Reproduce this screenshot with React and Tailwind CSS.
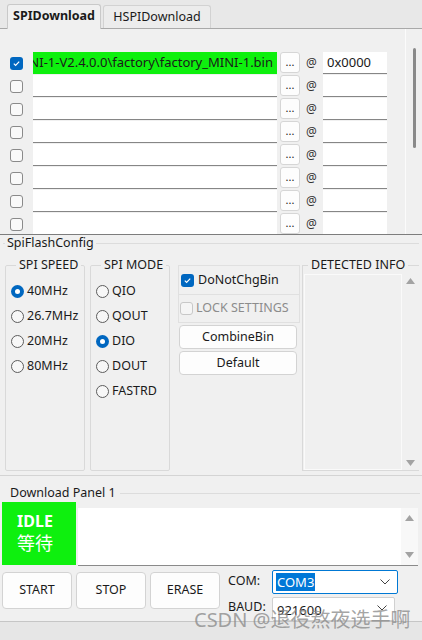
import { useState } from "react";

const font = { fontFamily: '"Noto Sans", "Noto Sans CJK SC", sans-serif' };

const Check = ({ checked, disabled }) => (
  <span
    className={
      "inline-flex w-[13px] h-[13px] shrink-0 items-center justify-center rounded-[3px] " +
      (checked
        ? "bg-[#0067c0]"
        : disabled
        ? "border border-[#c8c8c8] bg-[#f5f5f5]"
        : "border border-[#8a8a8a] bg-[#f9f9f9]")
    }>
    {checked && (
      <svg width="9" height="9" viewBox="0 0 10 10">
        <path d="M2 5.2l2 2 4-4.4" fill="none" stroke="#fff" strokeWidth="1.3" />
      </svg>
    )}
  </span>
);

const Radio = ({ on }) => (
  <span
    className={
      "inline-flex w-[13px] h-[13px] shrink-0 items-center justify-center rounded-full " +
      (on ? "bg-[#0067c0]" : "border border-[#5c5c5c] bg-[#f7f7f7]")
    }>
    {on && <span className="w-[5px] h-[5px] rounded-full bg-white" />}
  </span>
);

const Arrow = ({ down }) => (
  <svg width="9" height="6" viewBox="0 0 9 6">
    <path d={down ? "M0 0h9L4.5 6z" : "M0 6h9L4.5 0z"} fill="#a3a3a3" />
  </svg>
);

const Chevron = () => (
  <svg width="10" height="6" viewBox="0 0 10 6">
    <path d="M0.5 0.5l4.5 4.5 4.5-4.5" fill="none" stroke="#444" strokeWidth="1" />
  </svg>
);

const FileRow = ({ path, addr, checked, green }) => (
  <div className="flex h-[23px] items-start">
    <div className="w-[33px] h-[22px] flex items-center justify-center">
      <Check checked={checked} />
    </div>
    <div
      className={
        "w-[244px] h-[22px] flex items-center justify-end overflow-hidden whitespace-nowrap pr-[4px] text-[13px] text-[#1a1a1a] " +
        (green ? "bg-[#0ef00e]" : "bg-white border-b border-[#868686]")
      }>
      {path}
    </div>
    <button className="ml-[3px] w-[20px] h-[21px] rounded-[3px] border border-[#d6d6d6] bg-[#fdfdfd] text-[11px] leading-none pb-[2px] text-[#222]">
      ...
    </button>
    <span className="w-[23px] h-[22px] flex items-center justify-center text-[12px] text-[#333]">@</span>
    <div className="w-[64px] h-[22px] bg-white border-b border-[#868686] flex items-center px-[4px] text-[13px] text-[#1a1a1a]">
      {addr}
    </div>
  </div>
);

const Group = ({ title, className, children }) => (
  <fieldset className={"border border-[#d9d9d9] rounded-[2px] " + className}>
    <legend className="px-[3px] ml-[5px] text-[12.5px] leading-[16px] text-[#1a1a1a]">{title}</legend>
    {children}
  </fieldset>
);

const Opt = ({ label, on }) => (
  <div className="flex items-center gap-[3px] h-[25px] text-[12.5px] text-[#1a1a1a]">
    <Radio on={on} />
    <span>{label}</span>
  </div>
);

const Btn = ({ children, className }) => (
  <button
    className={
      "rounded-[4px] border border-[#d3d3d3] bg-[#fdfdfd] text-[12.5px] text-[#1a1a1a] flex items-center justify-center " +
      className
    }>
    {children}
  </button>
);

export default function App() {
  const [speed] = useState("40MHz");
  const [mode] = useState("DIO");
  const rows = [
    { path: "NI-1-V2.4.0.0\\factory\\factory_MINI-1.bin", addr: "0x0000", checked: true, green: true },
    {}, {}, {}, {}, {}, {}, {},
  ];

  return (
    <div className="relative w-[422px] h-[640px] overflow-hidden bg-[#f0f0f0] text-[#1a1a1a]" style={font}>
      {/* tabs */}
      <div className="h-[29px] bg-[#e8e8e8] border-b border-[#a9a9a9] flex items-end pl-[7px] gap-[2px]">
        <div className="h-[25px] w-[94px] bg-[#f0f0f0] border border-b-0 border-[#c9c9c9] rounded-t-[3px] flex items-center justify-center text-[12.5px] font-bold -mb-px pb-[1px]">
          SPIDownload
        </div>
        <div className="h-[23px] w-[108px] bg-[#ececec] border border-b-0 border-[#d2d2d2] rounded-t-[3px] flex items-center justify-center text-[12.5px]">
          HSPIDownload
        </div>
      </div>

      {/* file list */}
      <div className="h-[206px] flex border-b border-[#7d7d7d]">
        <div className="flex-1 pt-[23px] overflow-hidden">
          {rows.map((r, i) => (
            <FileRow key={i} {...r} />
          ))}
        </div>
        <div className="w-[17px] border-l border-[#fbfbfb] flex justify-center pt-[19px]">
          <div className="w-[3px] h-[100px] bg-[#8a8a8a] rounded-full" />
        </div>
      </div>

      {/* SpiFlashConfig */}
      <div className="h-[241px] border-b border-[#d4d4d4] px-[3px]">
        <fieldset className="border-t border-[#dcdcdc] h-full">
          <legend className="px-[2px] ml-[2px] text-[12.5px] leading-[16px]">SpiFlashConfig</legend>
          <div className="flex h-[220px] pt-[6px]">
            <Group title="SPI SPEED" className="ml-[2px] w-[80px] h-[214px] pl-[5px] pt-[6px]">
              {["40MHz", "26.7MHz", "20MHz", "80MHz"].map((s) => (
                <Opt key={s} label={s} on={s === speed} />
              ))}
            </Group>
            <Group title="SPI MODE" className="ml-[5px] w-[80px] h-[214px] pl-[5px] pt-[6px]">
              {["QIO", "QOUT", "DIO", "DOUT", "FASTRD"].map((s) => (
                <Opt key={s} label={s} on={s === mode} />
              ))}
            </Group>
            <div className="ml-[8px] w-[122px] pt-[8px] flex flex-col">
              <div className="h-[30px] border border-[#e0e0e0] flex items-center gap-[4px] pl-[2px] text-[12.5px]">
                <Check checked />
                <span>DoNotChgBin</span>
              </div>
              <div className="h-[28px] border border-t-0 border-[#e0e0e0] flex items-center gap-[3px] pl-[1px] text-[12.5px] text-[#8c8c8c]">
                <Check disabled />
                <span>LOCK SETTINGS</span>
              </div>
              <Btn className="mt-[2px] ml-[1px] w-[118px] h-[24px]">CombineBin</Btn>
              <Btn className="mt-[2px] ml-[1px] w-[118px] h-[24px]">Default</Btn>
            </div>
            <Group title="DETECTED INFO" className="ml-[2px] flex-1 h-[214px] border-r-0 rounded-none">
              <div className="flex h-[196px] mt-[1px] ml-[1px]">
                <div className="flex-1 border border-[#fafafa]" />
                <div className="w-[17px] flex flex-col items-center justify-between py-[4px]">
                  <Arrow />
                  <Arrow down />
                </div>
              </div>
            </Group>
          </div>
        </fieldset>
      </div>

      {/* Download Panel */}
      <div className="px-[2px] pt-[9px]">
        <div className="flex items-center h-[16px] text-[12.5px]">
          <span className="pl-[8px] pr-[4px]">Download Panel 1</span>
          <div className="flex-1 border-t border-[#dcdcdc]" />
        </div>
        <div className="flex mt-[1px] h-[64px]">
          <div className="w-[74px] h-[63px] bg-[#0ef00e] flex flex-col items-start pl-[15px] pt-[9px] text-white">
            <span className="text-[16px] font-bold leading-[20px]">IDLE</span>
            <span className="text-[18px] leading-[25px]">等待</span>
          </div>
          <div className="flex-1 ml-[2px] mt-[6px] h-[58px] bg-white border-b border-[#8a8a8a] flex">
            <div className="flex-1" />
            <div className="w-[17px] bg-[#f8f8f8] flex flex-col items-center justify-between py-[7px]">
              <Arrow />
              <Arrow down />
            </div>
          </div>
          <div className="w-[2px]" />
        </div>
        <div className="flex mt-[6px] gap-[4px]">
          <Btn className="w-[70px] h-[37px]">START</Btn>
          <Btn className="w-[70px] h-[37px]">STOP</Btn>
          <Btn className="w-[70px] h-[37px]">ERASE</Btn>
          <div className="ml-[4px] flex flex-col">
            <div className="flex items-center h-[25px] -mt-[3px]">
              <span className="w-[44px] text-[12.5px]">COM:</span>
              <div className="w-[126px] h-[24px] rounded-[2px] border border-[#0078d4] bg-white flex items-center pl-[3px] pr-[7px]">
                <span className="bg-[#0078d7] text-white text-[13px] leading-[18px] px-[1px]">COM3</span>
                <div className="flex-1" />
                <Chevron />
              </div>
            </div>
            <div className="flex items-center h-[24px] mt-[3px]">
              <span className="w-[44px] text-[12.5px] -mt-[4px]">BAUD:</span>
              <div className="w-[123px] h-[24px] rounded-[2px] border border-[#d0d0d0] bg-white flex items-start pt-[3px] pl-[4px] pr-[7px] text-[13px]">
                <span>921600</span>
                <div className="flex-1" />
                <span className="pt-[4px]"><Chevron /></span>
              </div>
            </div>
          </div>
        </div>
      </div>

      {/* status strip */}
      <div className="absolute left-0 right-0 bottom-0 h-[19px] bg-[#e6e6e6] border-t border-[#c6c6c6]" />

      {/* watermark */}
      <div className="absolute left-[194px] top-[607px] text-[20px] leading-[26px] text-[#8c8c8c]/80 whitespace-nowrap pointer-events-none">
        CSDN @退役熬夜选手啊
      </div>
    </div>
  );
}
